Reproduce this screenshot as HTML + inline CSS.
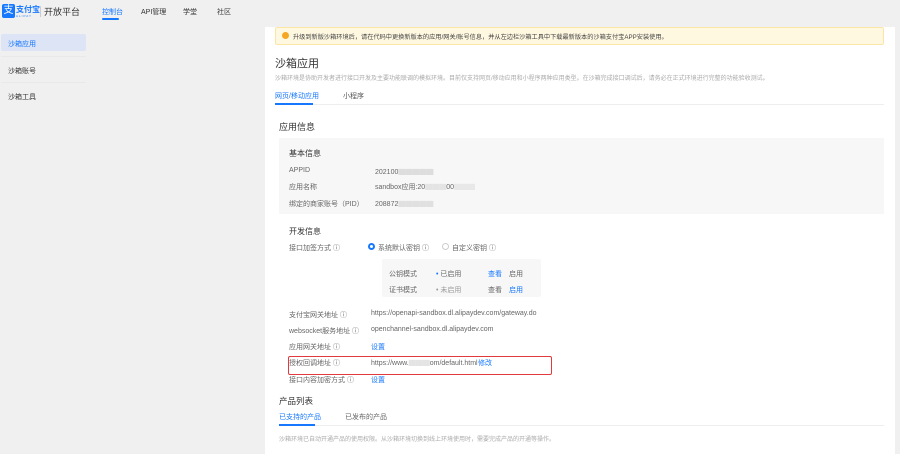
<!DOCTYPE html>
<html><head><meta charset="utf-8"><style>
*{margin:0;padding:0;box-sizing:border-box}
body{width:900px;height:454px;overflow:hidden;background:#f0f0f0;font-family:"Liberation Sans","Noto Sans CJK SC",sans-serif;color:#333;position:relative;font-size:7px}
.a{position:absolute;white-space:nowrap}
.blue{color:#1677ff}
.g{color:#666}
</style></head><body>
<div class="a" style="left:2px;top:4px;width:13px;height:14px;background:#1677ff;border-radius:2px;color:#fff;font-size:10px;line-height:14px;text-align:center">支</div>
<div class="a" style="left:16px;top:4px;font-size:8px;font-weight:bold;color:#1677ff">支付宝</div>
<div class="a" style="left:16px;top:14px;font-size:3px;color:#1677ff;letter-spacing:1px">ALIPAY</div>
<div class="a" style="left:40px;top:6px;width:1px;height:11px;background:#ccc"></div>
<div class="a" style="left:44px;top:5px;font-size:9px;color:#333">开放平台</div>
<div class="a blue" style="left:102px;top:7px;font-size:7px">控制台</div>
<div class="a" style="left:102px;top:18px;width:17px;height:2px;background:#1677ff;border-radius:1px"></div>
<div class="a" style="left:141px;top:7px">API管理</div>
<div class="a" style="left:183px;top:7px">学堂</div>
<div class="a" style="left:217px;top:7px">社区</div>
<div class="a" style="left:1px;top:34px;width:85px;height:17px;background:#dce4f5;border-radius:2px"></div>
<div class="a blue" style="left:8px;top:39px">沙箱应用</div>
<div class="a" style="left:1px;top:56px;width:85px;height:1px;background:#e9e9e9"></div>
<div class="a" style="left:8px;top:66px">沙箱账号</div>
<div class="a" style="left:1px;top:82px;width:85px;height:1px;background:#e9e9e9"></div>
<div class="a" style="left:8px;top:92px">沙箱工具</div>
<div class="a" style="left:265px;top:27px;width:630px;height:427px;background:#fff"></div>
<div class="a" style="left:275px;top:27px;width:609px;height:18px;background:#fff8e1;border:1px solid #fbe6a8;border-radius:2px"></div>
<div class="a" style="left:282px;top:32px;width:7px;height:7px;border-radius:50%;background:#f5a623"></div>
<div class="a" style="left:293px;top:32px;font-size:6.2px;color:#444">升级到新版沙箱环境后，请在代码中更换新版本的应用/网关/账号信息，并从左边栏沙箱工具中下载最新版本的沙箱支付宝APP安装使用。</div>
<div class="a" style="left:275px;top:55px;font-size:11px;color:#333">沙箱应用</div>
<div class="a" style="left:275px;top:73px;font-size:6px;color:#aaa">沙箱环境是协助开发者进行接口开发及主要功能联调的模拟环境。目前仅支持网页/移动应用和小程序两种应用类型。在沙箱完成接口调试后，请务必在正式环境进行完整的功能验收测试。</div>
<div class="a blue" style="left:275px;top:91px">网页/移动应用</div>
<div class="a" style="left:343px;top:91px;color:#555">小程序</div>
<div class="a" style="left:275px;top:104px;width:609px;height:1px;background:#eee"></div>
<div class="a" style="left:275px;top:103px;width:38px;height:2px;background:#1677ff"></div>
<div class="a" style="left:279px;top:120px;font-size:9px">应用信息</div>
<div class="a" style="left:279px;top:138px;width:605px;height:76px;background:#f7f7f7"></div>
<div class="a" style="left:289px;top:148px;font-size:8px">基本信息</div>
<div class="a g" style="left:289px;top:167px">APPID</div><div class="a g" style="left:375px;top:167px">202100<span style="color:#ddd">▇▇▇▇▇</span></div>
<div class="a g" style="left:289px;top:182px">应用名称</div><div class="a g" style="left:375px;top:182px">sandbox应用:20<span style="color:#e4e4e4">▇▇▇</span>00<span style="color:#e8e8e8">▇▇▇</span></div>
<div class="a g" style="left:289px;top:199px">绑定的商家账号（PID）</div><div class="a g" style="left:375px;top:199px">208872<span style="color:#e0e0e0">▇▇▇▇▇</span></div>
<div class="a" style="left:289px;top:226px;font-size:8px">开发信息</div>
<div class="a g" style="left:289px;top:243px">接口加签方式 ⓘ</div>
<div class="a" style="left:368px;top:243px;width:7px;height:7px;border-radius:50%;border:2px solid #1677ff"></div>
<div class="a g" style="left:378px;top:243px">系统默认密钥 ⓘ</div>
<div class="a" style="left:442px;top:243px;width:7px;height:7px;border-radius:50%;border:1px solid #ccc"></div>
<div class="a g" style="left:452px;top:243px">自定义密钥 ⓘ</div>
<div class="a" style="left:382px;top:259px;width:159px;height:38px;background:#f7f7f7;border-radius:2px"></div>
<div class="a g" style="left:389px;top:269px">公钥模式</div><div class="a g" style="left:436px;top:269px"><span class="blue">•</span> 已启用</div><div class="a blue" style="left:488px;top:269px">查看</div><div class="a g" style="left:509px;top:269px">启用</div>
<div class="a g" style="left:389px;top:285px">证书模式</div><div class="a" style="left:436px;top:285px;color:#999">• 未启用</div><div class="a g" style="left:488px;top:285px">查看</div><div class="a blue" style="left:509px;top:285px">启用</div>
<div class="a g" style="left:289px;top:310px">支付宝网关地址 ⓘ</div><div class="a g" style="left:371px;top:310px">https://openapi-sandbox.dl.alipaydev.com/gateway.do</div>
<div class="a g" style="left:289px;top:326px">websocket服务地址 ⓘ</div><div class="a g" style="left:371px;top:326px">openchannel-sandbox.dl.alipaydev.com</div>
<div class="a g" style="left:289px;top:342px">应用网关地址 ⓘ</div><div class="a blue" style="left:371px;top:342px">设置</div>
<div class="a g" style="left:289px;top:358px">授权回调地址 ⓘ</div><div class="a g" style="left:371px;top:358px">https://www.<span style="color:#e4e4e4">▇▇▇</span>om/default.html</div><div class="a blue" style="left:478px;top:358px">修改</div>
<div class="a" style="left:288px;top:356px;width:264px;height:19px;border:1.5px solid #e0393e;border-radius:2px"></div>
<div class="a g" style="left:289px;top:375px">接口内容加密方式 ⓘ</div><div class="a blue" style="left:371px;top:375px">设置</div>
<div class="a" style="left:279px;top:395px;font-size:8.5px">产品列表</div>
<div class="a blue" style="left:279px;top:412px">已支持的产品</div>
<div class="a g" style="left:345px;top:412px">已发布的产品</div>
<div class="a" style="left:279px;top:425px;width:605px;height:1px;background:#eee"></div>
<div class="a" style="left:279px;top:424px;width:36px;height:2px;background:#1677ff"></div>
<div class="a" style="left:279px;top:434px;font-size:6px;color:#aaa">沙箱环境已自动开通产品的使用权限。从沙箱环境切换到线上环境使用时，需要完成产品的开通等操作。</div>
</body></html>
